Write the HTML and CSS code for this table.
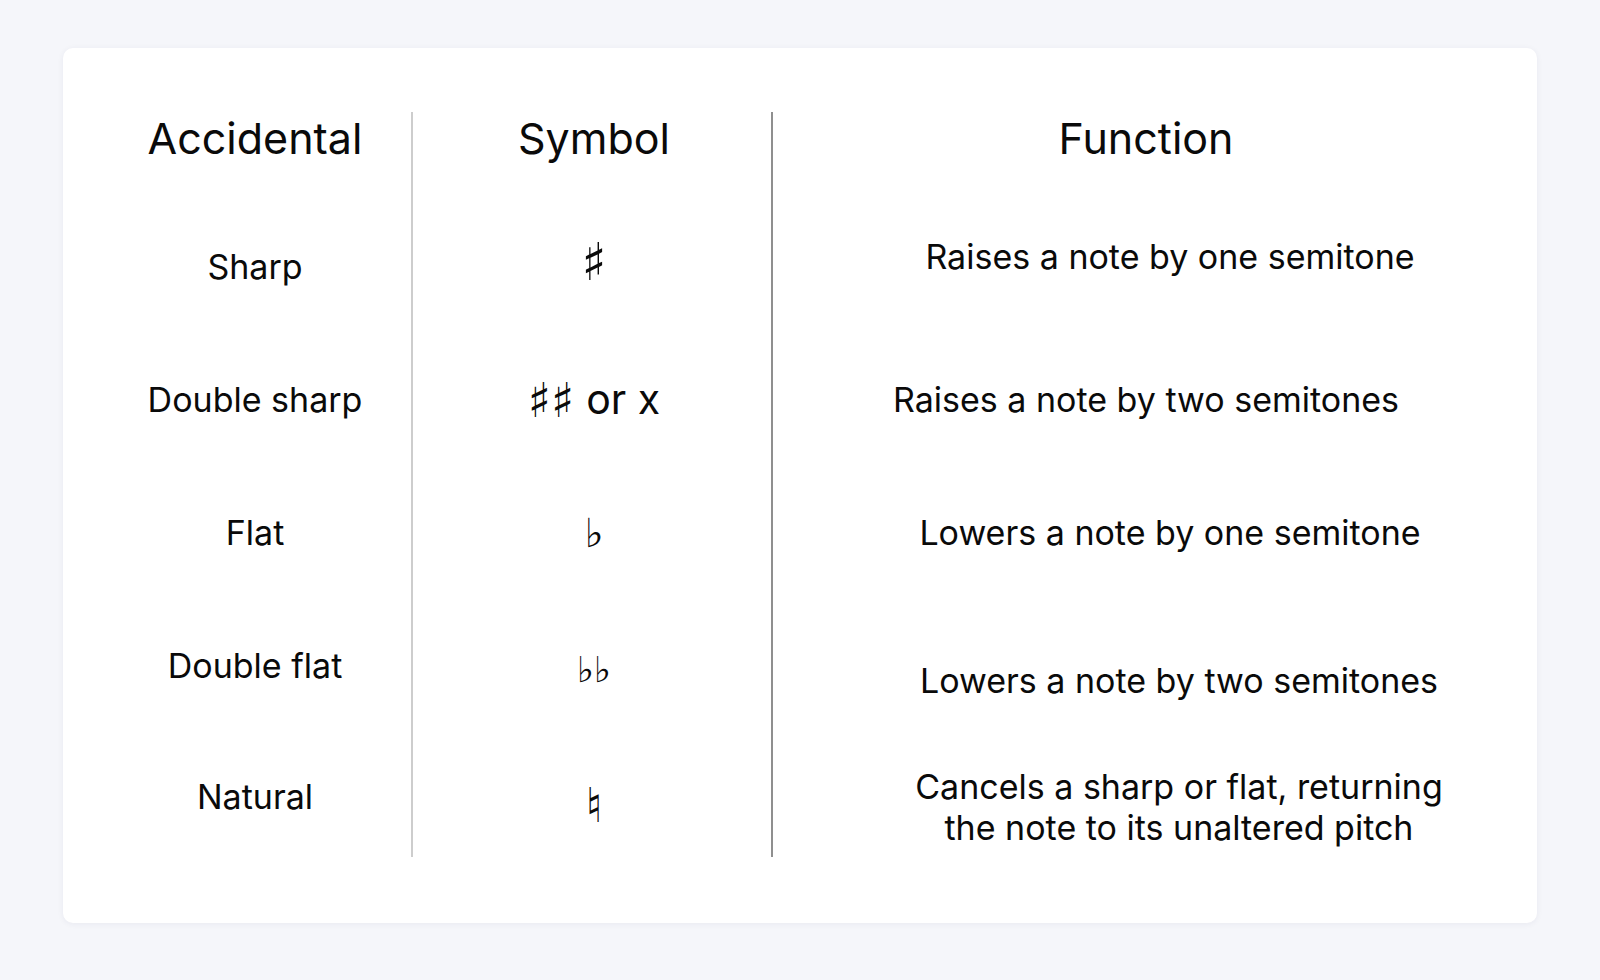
FILE: index.html
```html
<!DOCTYPE html>
<html lang="en">
<head>
<meta charset="utf-8">
<title>Accidentals</title>
<link rel="stylesheet" href="styles.css">
</head>
<body>
<main class="card">
  <div class="table">
    <div class="cell c1 head">Accidental</div>
    <div class="cell c2 head">Symbol</div>
    <div class="cell c3 head">Function</div>

    <div class="cell c1 row">Sharp</div>
    <div class="cell c2 row sym sharp up5">♯</div>
    <div class="cell c3 row up10 right24">Raises a note by one semitone</div>

    <div class="cell c1 row">Double sharp</div>
    <div class="cell c2 row"><span class="sym two">♯♯</span><span class="orx">or x</span></div>
    <div class="cell c3 row">Raises a note by two semitones</div>

    <div class="cell c1 row">Flat</div>
    <div class="cell c2 row sym flat">♭</div>
    <div class="cell c3 row right24">Lowers a note by one semitone</div>

    <div class="cell c1 row">Double flat</div>
    <div class="cell c2 row sym dflat down4">♭♭</div>
    <div class="cell c3 row down15 right33">Lowers a note by two semitones</div>

    <div class="cell c1 row last down2">Natural</div>
    <div class="cell c2 row last sym natural down10">♮</div>
    <div class="cell c3 row last down12 right33">Cancels a sharp or flat, returning<br>the note to its unaltered pitch</div>
  </div>
</main>
</body>
</html>
```

FILE: styles.css
```css
html, body {
  margin: 0;
  padding: 0;
}
body {
  background: #f5f6fa;
  font-family: Inter, "Noto Sans", sans-serif;
  color: #0a0a0a;
  padding: 48px 63px 58px 63px;
  box-sizing: border-box;
  height: 980px;
}
.card {
  background: #ffffff;
  border-radius: 10px;
  box-shadow: 0 1px 6px rgba(30, 40, 80, 0.06);
  height: 875px;
  box-sizing: border-box;
  padding: 64px 0 65px 0;
}
.table {
  display: grid;
  grid-template-columns: 348px 360px 1fr;
  grid-template-rows: 88px 133px 133px 133px 133px 125px;
  height: 745px;
}
.cell {
  display: flex;
  align-items: center;
  justify-content: center;
  text-align: center;
  box-sizing: border-box;
}
.c1 {
  padding-left: 36px;
}
.c2 {
  border-left: 2px solid #cdcdcd;
  padding-left: 4px;
}
.c3 {
  border-left: 2px solid #8f8f8f;
  padding-right: 18px;
}
.head {
  font-size: 43px;
  font-weight: 400;
  align-items: flex-start;
  line-height: 52px;
}
.row {
  font-size: 34px;
  line-height: 41px;
}
.sym {
  font-family: "DejaVu Sans", sans-serif;
  line-height: 1;
}
.sharp { font-size: 52px; }
.flat { font-size: 40px; }
.dflat { font-size: 36px; }
.natural { font-size: 48px; }
.two {
  font-size: 48px;
  margin-right: 12px;
  vertical-align: -0.08em;
}
.orx {
  font-family: Inter, sans-serif;
  font-size: 41px;
}
.up5 { padding-bottom: 10px; }
.up10 { padding-bottom: 20px; }
.down2 { padding-top: 4px; }
.down4 { padding-top: 8px; }
.down10 { padding-top: 20px; }
.down12 { padding-top: 24px; }
.down15 { padding-top: 30px; }
.right24 { padding-left: 48px; }
.right33 { padding-left: 66px; }
```
